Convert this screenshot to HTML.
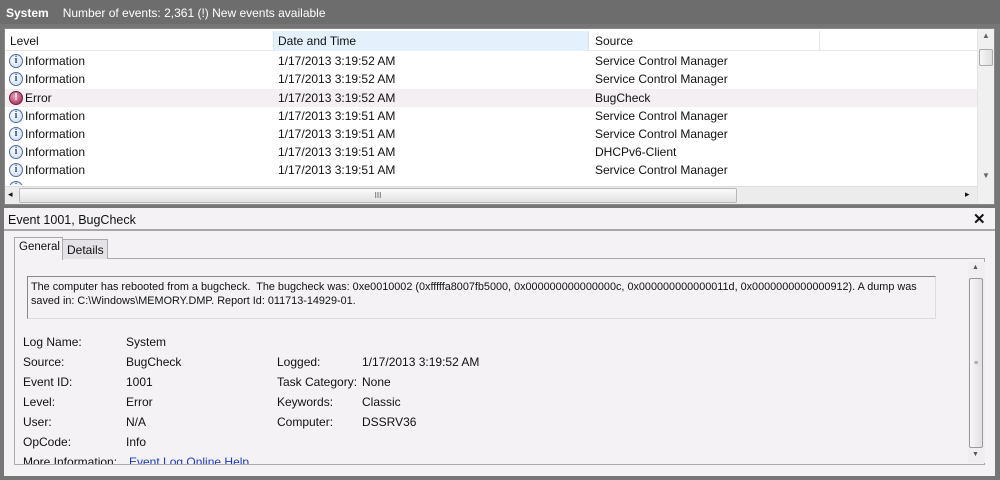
<!DOCTYPE html>
<html><head><meta charset="utf-8"><style>
*{margin:0;padding:0;box-sizing:border-box}
body{width:1000px;height:480px;overflow:hidden;background:#767676;font-family:"Liberation Sans",sans-serif;font-size:12px;color:#111;position:relative}
.abs{position:absolute;white-space:nowrap}
.title{left:0;top:0;width:1000px;height:24px;background:#6d6d6d;color:#fff;font-size:12px;line-height:26px}
.list{left:4px;top:28px;width:991px;height:177px;background:#fff;border:1px solid #888}
.hdr{position:absolute;left:0;top:2px;width:972px;height:20px;background:#fff;border-bottom:1px solid #e6e6e6}
.row{position:absolute;left:0;width:972px;height:18px;line-height:18px}
.ico{position:absolute;left:4px;top:2px;width:14px;height:14px;border-radius:50%;border:1px solid #4c6ea8;background:radial-gradient(circle at 40% 35%,#fff,#c9d6ee);color:#2a4f9a;font:bold 10px "Liberation Serif",serif;text-align:center;line-height:12px}
.err{border-color:#7a1a3a;background:radial-gradient(circle at 40% 35%,#e7a0b8,#9a2050);color:#fff;font-family:"Liberation Sans";}
.lower{left:4px;top:208px;width:991px;height:268px;background:#f4f2f5}
</style></head><body>
<div class="abs title"><b style="margin-left:6px">System</b><span style="margin-left:14px">Number of events: 2,361 (!) New events available</span></div>
<div class="abs list">
 <div class="hdr">
  <span class="abs" style="left:5px;top:3px">Level</span>
  <div class="abs" style="left:268px;top:0;width:316px;height:20px;background:#e4f0fb;border-left:1px solid #d8e4f0;border-right:1px solid #d8e4f0"></div>
  <span class="abs" style="left:273px;top:3px">Date and Time</span>
  <span class="abs" style="left:590px;top:3px">Source</span>
  <div class="abs" style="left:814px;top:0;width:1px;height:20px;background:#e4e4e4"></div>
 </div>
 <div class="row" style="top:23px"><div class="ico">i</div><span class="abs" style="left:20px">Information</span><span class="abs" style="left:273px">1/17/2013 3:19:52 AM</span><span class="abs" style="left:590px">Service Control Manager</span></div>
 <div class="row" style="top:41px"><div class="ico">i</div><span class="abs" style="left:20px">Information</span><span class="abs" style="left:273px">1/17/2013 3:19:52 AM</span><span class="abs" style="left:590px">Service Control Manager</span></div>
 <div class="row" style="top:60px;background:#f3eff3"><div class="ico err">!</div><span class="abs" style="left:20px">Error</span><span class="abs" style="left:273px">1/17/2013 3:19:52 AM</span><span class="abs" style="left:590px">BugCheck</span></div>
 <div class="row" style="top:78px"><div class="ico">i</div><span class="abs" style="left:20px">Information</span><span class="abs" style="left:273px">1/17/2013 3:19:51 AM</span><span class="abs" style="left:590px">Service Control Manager</span></div>
 <div class="row" style="top:96px"><div class="ico">i</div><span class="abs" style="left:20px">Information</span><span class="abs" style="left:273px">1/17/2013 3:19:51 AM</span><span class="abs" style="left:590px">Service Control Manager</span></div>
 <div class="row" style="top:114px"><div class="ico">i</div><span class="abs" style="left:20px">Information</span><span class="abs" style="left:273px">1/17/2013 3:19:51 AM</span><span class="abs" style="left:590px">DHCPv6-Client</span></div>
 <div class="row" style="top:132px"><div class="ico">i</div><span class="abs" style="left:20px">Information</span><span class="abs" style="left:273px">1/17/2013 3:19:51 AM</span><span class="abs" style="left:590px">Service Control Manager</span></div>
 <div class="row" style="top:150px;height:6px;overflow:hidden"><div class="ico">i</div></div>
 <div class="abs" style="left:0;top:157px;width:972px;height:18px;background:#ececec;border-top:1px solid #ddd"><span class="abs" style="left:3px;top:2px;font-size:9px">◂</span><div class="abs" style="left:14px;top:1px;width:718px;height:15px;background:linear-gradient(#fbfbfb,#e2e2e2);border:1px solid #b8b8b8;border-radius:2px;font-size:8px;text-align:center;line-height:13px;color:#555">III</div><span class="abs" style="left:960px;top:2px;font-size:9px">▸</span></div>
 <div class="abs" style="left:972px;top:0;width:17px;height:175px;background:#f0f0f0;border-left:1px solid #e4e4e4"><span class="abs" style="left:4px;top:2px;font-size:8px;color:#666">▲</span><div class="abs" style="left:1px;top:20px;width:14px;height:17px;background:linear-gradient(90deg,#f6f6f6,#e0e0e0);border:1px solid #aaa;border-radius:2px"></div><span class="abs" style="left:4px;top:142px;font-size:8px;color:#666">▼</span></div>
</div>
<div class="abs lower">
 <span class="abs" style="left:4px;top:5px;font-size:12.5px">Event 1001, BugCheck</span>
 <span class="abs" style="left:969px;top:2px;font-size:15px;font-weight:bold">✕</span>
 <div class="abs" style="left:0;top:21px;width:991px;height:2px;background:#a8a8a8"></div>
 <div class="abs" style="left:10px;top:50px;width:971px;height:207px;border:1px solid #aaa;background:#f4f2f5"></div>
 <div class="abs" style="left:58px;top:31px;width:46px;height:20px;background:#e4e2e6;border:1px solid #aaa;border-bottom:none"><span class="abs" style="left:4px;top:3px">Details</span></div>
 <div class="abs" style="left:10px;top:29px;width:49px;height:23px;background:#f4f2f5;border:1px solid #aaa;border-bottom:none"><span class="abs" style="left:4px;top:3px;font-size:11.5px">General</span></div>
 <div class="abs" style="left:23px;top:68px;width:909px;height:43px;border:1px solid #ddd;border-top:1px solid #888;border-left:1px solid #888;line-height:14px;overflow:hidden;padding:3px 3px;font-size:10.85px">The computer has rebooted from a bugcheck.&nbsp; The bugcheck was: 0xe0010002 (0xfffffa8007fb5000, 0x000000000000000c, 0x000000000000011d, 0x0000000000000912). A dump was<br>saved in: C:\Windows\MEMORY.DMP. Report Id: 011713-14929-01.</div>
 <div class="abs" style="left:964px;top:54px;width:17px;height:201px;background:#f0eef1"><span class="abs" style="left:4px;top:2px;font-size:7px;color:#555">▲</span><div class="abs" style="left:1px;top:16px;width:14px;height:170px;background:linear-gradient(90deg,#f8f8f8,#e0e0e0);border:1px solid #999;border-radius:2px;font-size:7px;color:#777;line-height:170px;text-align:center">≡</div><span class="abs" style="left:4px;top:189px;font-size:7px;color:#555">▼</span></div>
 <div class="abs" style="left:10px;top:120px;width:940px;height:136px;overflow:hidden">
  <span class="abs" style="left:9px;top:7px">Log Name:</span><span class="abs" style="left:112px;top:7px">System</span>
  <span class="abs" style="left:9px;top:27px">Source:</span><span class="abs" style="left:112px;top:27px">BugCheck</span><span class="abs" style="left:263px;top:27px">Logged:</span><span class="abs" style="left:348px;top:27px">1/17/2013 3:19:52 AM</span>
  <span class="abs" style="left:9px;top:47px">Event ID:</span><span class="abs" style="left:112px;top:47px">1001</span><span class="abs" style="left:263px;top:47px">Task Category:</span><span class="abs" style="left:348px;top:47px">None</span>
  <span class="abs" style="left:9px;top:67px">Level:</span><span class="abs" style="left:112px;top:67px">Error</span><span class="abs" style="left:263px;top:67px">Keywords:</span><span class="abs" style="left:348px;top:67px">Classic</span>
  <span class="abs" style="left:9px;top:87px">User:</span><span class="abs" style="left:112px;top:87px">N/A</span><span class="abs" style="left:263px;top:87px">Computer:</span><span class="abs" style="left:348px;top:87px">DSSRV36</span>
  <span class="abs" style="left:9px;top:107px">OpCode:</span><span class="abs" style="left:112px;top:107px">Info</span>
  <span class="abs" style="left:9px;top:127px">More Information:</span><span class="abs" style="left:115px;top:127px;color:#1a3cc8">Event Log Online Help</span>
 </div>
</div>
</body></html>
